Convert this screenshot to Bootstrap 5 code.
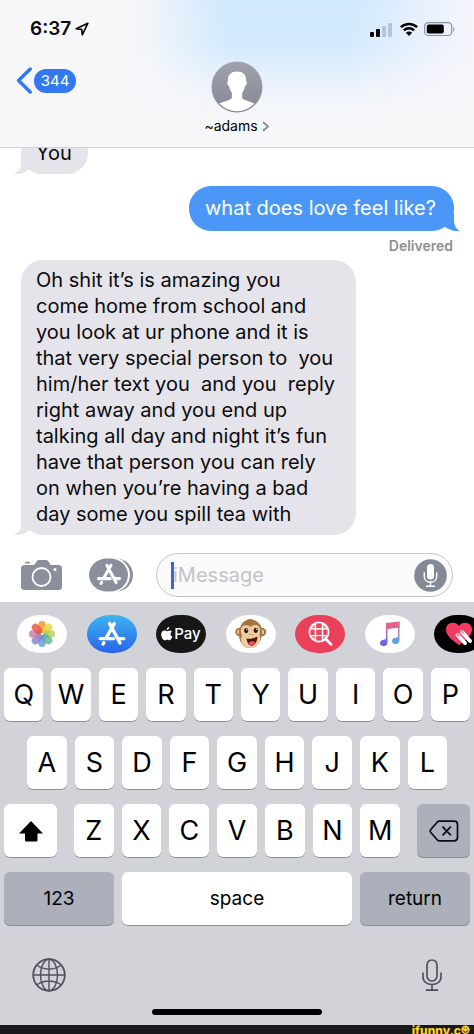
<!DOCTYPE html>
<html lang="en">
<head>
<meta charset="utf-8">
<meta name="viewport" content="width=device-width, initial-scale=1">
<title>Messages</title>
<link rel="stylesheet" href="https://cdn.jsdelivr.net/npm/bootstrap@5.3.0/dist/css/bootstrap.min.css">
<style>
  body { font-family: Inter, "Liberation Sans", sans-serif; color: #0b0b0d; background: #fff; overflow-x: hidden; }
  svg { display: block; flex: none; }
  button { color: inherit; }

  /* header */
  .chat-head {
    background:
      linear-gradient(to bottom, rgba(247,247,249,0) 0, rgba(247,247,249,.12) 45px, rgba(247,247,249,.7) 85px, #f7f7f9 118px),
      linear-gradient(to right, #f7f7f9 28%, #cfe9ff 48%, #cfe9ff 74%, #e6effd 88%, #f5f6fb 100%);
    border-bottom: 1px solid #d0d0d3;
  }
  .status-line { padding: 17px 18px 0 30px; height: 41px; }
  .clock { font-size: 19px; line-height: 24px; font-weight: 600; }
  .head-row { display: grid; grid-template-columns: 1fr auto 1fr; padding: 20px 16px 0; height: 106px; align-items: start; }
  .back-link { padding-top: 6px; }
  .unread { background: #3478f0; color: #fff; border-radius: 12px; font-size: 15px; line-height: 24px; width: 42px; }
  .who { font-size: 14px; line-height: 20px; margin-top: 3px; }

  /* messages */
  .bubble { position: relative; font-size: 20px; line-height: 26px; border-radius: 22px; white-space: pre-line; }
  .bubble-in { background: #e5e4ea; padding: 8px 16px 8px 15px; margin-left: 21px; }
  .bubble-long { width: 335px; padding-top: 7px; white-space: pre; }
  .bubble-cut { margin-top: -16px; }
  .bubble-out { background: #4b97f7; color: #fff; padding: 9px 0 10px 16px; width: 265px; margin-right: 20px; }
  .tail { position: absolute; bottom: 0; }
  .tail-in { left: -8px; }
  .tail-out { right: -6px; }
  .receipt { font-size: 14px; line-height: 15px; font-weight: 600; color: #8e8e92; padding: 7px 21px 7px; }

  /* composer */
  .composer { padding: 18px 21px 5px; }
  .apps-btn { margin: 0 23px 0 26px; }
  .entry { height: 44px; min-width: 0; border: 1px solid #c6c6ca; border-radius: 22px; background: #fafafa; padding: 0 5px 0 16px; position: relative; }
  .entry input { width: 0; border: 0; background: none; outline: 0; font-size: 20px; line-height: 26px; padding: 0; min-width: 0; }
  .entry input::placeholder { color: #c3c3c8; opacity: 1; }
  .text-caret { position: absolute; left: 14px; top: 8px; width: 3px; height: 27px; background: #3f62d8; }

  /* keyboard */
  .keyboard { background: #d1d3d9; padding-bottom: 10px; }
  .app-strip { padding: 13px 0 15px 17px; overflow: hidden; }
  .app-strip-row { margin-right: -10px; }
  .app-pill { width: 50px; height: 38px; border-radius: 23px / 19px; overflow: hidden; background: #fff; flex: none; }
  .app-store { background: linear-gradient(#3db4f2, #2a64e8); }
  .app-pay { background: #161617; color: #fff; font-size: 15px; line-height: 20px; font-weight: 500; gap: 1px; }
  .app-search { background: #ea4059; }
  .app-touch { background: #000; }
  .key-rows { display: flex; flex-direction: column; gap: 14px; padding: 0 4px; }
  .key-row { display: flex; gap: 8px; }
  .key-row-mid { padding: 0 23px; }
  .keycap { flex: 1 1 0; min-width: 0; height: 54px; padding: 0; border: 0; border-radius: 6px; background: #fff; box-shadow: inset 0 -1px 0 #8d9097; color: #000; font-size: 27px; line-height: 32px; display: flex; align-items: center; justify-content: center; }
  .keycap-side { flex: 0 0 53px; }
  .keycap-shift { margin-right: 9px; }
  .keycap-del { margin-left: 9px; }
  .keycap-wide { flex: 0 0 110px; }
  .keycap-word { font-size: 19px; line-height: 26px; }
  .keycap-gray { background: #abb0bb; box-shadow: inset 0 -1px 0 #888e9b; }
  .below-keys { padding: 32px 32px 0; height: 83px; color: #50535b; }
  .home-bar { width: 170px; height: 6px; border-radius: 3px; background: #000; }
  .site-bar { height: 9px; background: #19191b; overflow: hidden; padding-right: 4px; }
  .site-name { color: #ffd02a; font-size: 12px; line-height: 12px; font-weight: 800; }
</style>
<script src="https://cdn.jsdelivr.net/npm/bootstrap@5.3.0/dist/js/bootstrap.bundle.min.js"></script>
</head>
<body class="d-flex flex-column min-vh-100">

<svg width="0" height="0" class="position-absolute" aria-hidden="true">
  <symbol id="store-a" viewBox="0 0 28 26">
    <g fill="none" stroke="#fff" stroke-width="3.4" stroke-linecap="round">
      <path d="M11.6 2.6 22 22"/><path d="M16.2 2.6 8.2 16.8"/><path d="M2.2 17.6h13.2M20.6 17.6h5.2"/><path d="M5.8 21.8 5.1 23"/>
    </g>
  </symbol>
</svg>

<header class="chat-head">
  <div class="status-line d-flex justify-content-between align-items-start">
    <div class="d-flex align-items-center gap-1">
      <span class="clock">6:37</span>
      <svg width="14" height="14" viewBox="0 0 14 14"><path d="M12.8 1.3 1.2 6.8l5.5.6.6 5.4z" fill="none" stroke="#000" stroke-width="1.6" stroke-linejoin="round"/></svg>
    </div>
    <div class="d-flex align-items-center mt-1">
      <svg width="23" height="15" viewBox="0 0 23 15"><rect x="1" y="10" width="4" height="5" rx="1"/><rect x="7" y="7" width="4" height="8" rx="1"/><rect x="13" y="4" width="4" height="11" rx="1" fill="#b2c5d9"/><rect x="19" y="1" width="4" height="14" rx="1" fill="#b2c5d9"/></svg>
      <svg class="ms-2" width="18" height="14" viewBox="0 0 18 14"><g fill="none" stroke="#000" stroke-width="2.5"><path d="M.9 5.2a11.6 11.6 0 0 1 16.2 0"/><path d="M3.9 8.4a7.3 7.3 0 0 1 10.2 0"/></g><path d="M9 14 5.9 10.7a4.4 4.4 0 0 1 6.2 0z"/></svg>
      <svg class="ms-1" width="34" height="16" viewBox="0 0 34 16"><rect x="2.7" y="1.7" width="27" height="12.8" rx="3.6" fill="none" stroke="#87919c" stroke-width="1.2"/><rect x="4.8" y="3.6" width="17" height="9" rx="1.8"/><path d="M31.3 6v4.6c1.6-.7 1.6-3.9 0-4.6z" fill="#87919c"/></svg>
    </div>
  </div>
  <nav class="head-row" aria-label="Conversation">
    <a href="#" class="back-link d-flex align-items-center text-decoration-none" aria-label="Back, 344 unread">
      <svg width="18" height="27" viewBox="0 0 18 27"><path d="M14.2 2 2.6 13.5 14.2 25" fill="none" stroke="#3478f0" stroke-width="3.4" stroke-linecap="round" stroke-linejoin="round"/></svg>
      <span class="unread text-center">344</span>
    </a>
    <a href="#" class="d-flex flex-column align-items-center text-decoration-none text-black">
      <svg width="52" height="52" viewBox="0 0 52 52">
        <defs><linearGradient id="face" x2="0" y2="1"><stop stop-color="#a0a2ad"/><stop offset="1" stop-color="#858995"/></linearGradient><clipPath id="disc"><circle cx="26" cy="26" r="24.2"/></clipPath></defs>
        <circle cx="26" cy="26" r="25.5" fill="url(#face)"/>
        <path clip-path="url(#disc)" fill="#fff" d="M26 10.5c-6 0-9.4 3.700-9 9 0 1-.9 1.300-.6 2.800.3 1.500 1 2.800 1.700 3 .5 3 1.500 4.800 2.800 6.500v5c-1 3-9 3.200-15 7.200V52h40v-8c-6-4-13.700-4.200-14.700-7.200v-5c1.300-1.700 2.300-3.500 2.700-6.500.8-.2 1.500-1.500 1.800-3 .3-1.500-.6-1.800-.6-2.800.3-5.300-3-9-9.100-9z"/>
      </svg>
      <span class="who d-flex align-items-center gap-1">~adams <svg width="8" height="11" viewBox="0 0 8 11"><path d="M1.500 1.500l4.500 4-4.500 4" fill="none" stroke="#8b8b90" stroke-width="1.800" stroke-linecap="round"/></svg></span>
    </a>
  </nav>
</header>

<main class="d-flex flex-column flex-grow-1">
  <div class="overflow-hidden d-flex">
    <div class="bubble bubble-in bubble-cut">You<svg class="tail tail-in" width="24" height="18" viewBox="0 0 24 18"><path d="M8 0v8c0 5-3 8.500-8 10 7 .4 12-1 15-4l9-6z" fill="#e5e4ea"/></svg></div>
  </div>
  <div class="d-flex justify-content-end pt-1 mt-2">
    <div class="bubble bubble-out">what does love feel like?<svg class="tail tail-out" width="24" height="18" viewBox="0 0 24 18"><path d="M18 0v7c0 5 2 9 6 11-6 .3-11-1-15-4.300L0 6z" fill="#4b97f7"/><path d="M17 0H0v12l9 2z" fill="#4b97f7"/></svg></div>
  </div>
  <div class="receipt text-end">Delivered</div>
  <div class="bubble bubble-in bubble-long">Oh shit it’s is amazing you
come home from school and
you look at ur phone and it is
that very special person to  you
him/her text you  and you  reply
right away and you end up
talking all day and night it’s fun
have that person you can rely
on when you’re having a bad
day some you spill tea with<svg class="tail tail-in" width="24" height="18" viewBox="0 0 24 18"><path d="M8 0v8c0 5-3 8.500-8 10 7 .4 12-1 15-4l9-6z" fill="#e5e4ea"/></svg></div>

  <form class="composer d-flex align-items-center mt-auto" onsubmit="return false">
    <button type="button" class="border-0 bg-transparent p-0" aria-label="Camera">
      <svg width="42" height="32" viewBox="0 0 42 32"><path fill="#8a8f9b" d="M4 6h8c1 0 1.700-.5 2.300-1.500l1-1.600C16 1.500 17 1 18.500 1h6c1.500 0 2.500.5 3.200 1.900l1 1.600C29.300 5.500 30 6 31 6h6.500C40 6 41 7.200 41 9.500v18c0 2.300-1 3.500-3.500 3.500h-34C1 31 0 29.800 0 27.500v-18C0 7.200 1.200 6 4 6z"/><rect x="4" y="2.700" width="5" height="1.800" rx=".9" fill="#8a8f9b"/><circle cx="20.500" cy="18" r="9" fill="none" stroke="#fff" stroke-width="1.800"/><circle cx="34" cy="10.500" r="1.500" fill="#fff"/></svg>
    </button>
    <button type="button" class="apps-btn border-0 bg-transparent p-0" aria-label="Apps">
      <svg width="44" height="34" viewBox="0 0 44 34"><rect x="8" y=".5" width="36" height="33" rx="17" fill="#8a8f9b"/><rect x="3" y="-.5" width="38" height="35" rx="18" fill="#fff"/><rect x="0" y=".5" width="39" height="33" rx="18" ry="16.500" fill="#8a8f9b"/><use href="#store-a" x="7.500" y="4.500" width="25" height="24"/></svg>
    </button>
    <div class="entry d-flex align-items-center flex-grow-1">
      <input class="flex-grow-1" type="text" placeholder="iMessage" aria-label="iMessage">
      <span class="text-caret"></span>
      <button type="button" class="border-0 bg-transparent p-0" aria-label="Record audio">
        <svg width="33" height="33" viewBox="0 0 33 33"><circle cx="16.500" cy="16.500" r="16.300" fill="#838a96"/><rect x="13" y="5" width="7" height="15.500" rx="3.500" fill="#fff"/><path d="M10.300 14v3.400c0 7.600 12.400 7.600 12.400 0V14M16.500 23v4M12.500 27.300h8" fill="none" stroke="#fff" stroke-width="1.500" stroke-linecap="round"/></svg>
      </button>
    </div>
  </form>
</main>

<section class="keyboard" aria-label="Keyboard">
  <div class="app-strip">
    <div class="app-strip-row d-flex justify-content-between">
      <a href="#" class="app-pill d-flex align-items-center justify-content-center" aria-label="Photos">
        <svg width="28" height="28" viewBox="-14 -14 28 28"><g fill-opacity=".82">
          <rect x="-3.700" y="-13" width="7.400" height="12" rx="3.700" fill="#f2932c"/>
          <rect x="-3.700" y="-13" width="7.400" height="12" rx="3.700" fill="#ead437" transform="rotate(45)"/>
          <rect x="-3.700" y="-13" width="7.400" height="12" rx="3.700" fill="#b6d058" transform="rotate(90)"/>
          <rect x="-3.700" y="-13" width="7.400" height="12" rx="3.700" fill="#5fb889" transform="rotate(135)"/>
          <rect x="-3.700" y="-13" width="7.400" height="12" rx="3.700" fill="#5f9fd6" transform="rotate(180)"/>
          <rect x="-3.700" y="-13" width="7.400" height="12" rx="3.700" fill="#8583c4" transform="rotate(225)"/>
          <rect x="-3.700" y="-13" width="7.400" height="12" rx="3.700" fill="#c57ba8" transform="rotate(270)"/>
          <rect x="-3.700" y="-13" width="7.400" height="12" rx="3.700" fill="#e4573c" transform="rotate(315)"/></g></svg>
      </a>
      <a href="#" class="app-pill app-store d-flex align-items-center justify-content-center" aria-label="App Store"><svg width="28" height="26"><use href="#store-a"/></svg></a>
      <a href="#" class="app-pill app-pay d-flex align-items-center justify-content-center text-decoration-none"><svg width="12" height="14" viewBox="0 0 12 14"><path fill="#fff" d="M8.300 0c.1 1.600-1.100 3-2.600 3C5.500 1.600 6.900.1 8.300 0zM10.800 4.700c-2 1.300-1.600 4 .6 4.900-.5 1.500-1.700 3.700-2.900 3.700-.9 0-1.200-.5-2.300-.5s-1.500.5-2.300.5C2.100 13.300.2 10 .2 7.400c0-2.500 1.600-3.900 3.200-3.900 1.100 0 1.900.7 2.600.7.700 0 1.600-.8 2.900-.8.700 0 1.500.4 1.900 1.300z"/></svg>Pay</a>
      <a href="#" class="app-pill d-flex align-items-center justify-content-center" aria-label="Animoji">
        <svg width="32" height="32" viewBox="0 0 32 32"><circle cx="4.500" cy="14" r="4.200" fill="#a87741"/><circle cx="4.500" cy="14" r="2.400" fill="#edc99d"/><circle cx="27" cy="14" r="4.200" fill="#a87741"/><circle cx="27" cy="14" r="2.200" fill="#edc99d"/><path fill="#a67440" d="M15 1c1.500.7 3 .3 4 1.200C25 4 27.500 9 27 16c-.5 8-5 14-12 14S4 24 4 16C4 8 8 2 15 1z"/><path fill="#efcca0" d="M16 9c3-3.500 9-2 9 3 0 2-.5 3.500-.5 5 3 7-2.500 13-9 13C8 30 4 24 7 17.500 4.500 12 6 7.500 10 7.200c2.500 0 4.500.6 6 1.800z"/><ellipse cx="11.200" cy="12.600" rx="2.100" ry="2.600" fill="#24170f"/><ellipse cx="20.800" cy="12.300" rx="2.100" ry="2.600" fill="#24170f"/><circle cx="11.800" cy="11.700" r=".7" fill="#fff"/><circle cx="21.400" cy="11.400" r=".7" fill="#fff"/><path d="M14.500 16.500h.8M17.300 16.500h.8" stroke="#7c512d" stroke-width="1.200"/><path d="M11.500 20.500c4 .8 8-.3 11-2-.2 5-2.500 9-5.500 9.200-3 .1-5-3-5.500-7.200z" fill="#54120f"/><path d="M13.500 25c2-2 5-2.300 7-.7-1 2-2.200 3.200-3.600 3.200s-2.600-1-3.400-2.500z" fill="#e8545c"/></svg>
      </a>
      <a href="#" class="app-pill app-search d-flex align-items-center justify-content-center" aria-label="Images">
        <svg width="28" height="28" viewBox="0 0 28 28"><circle cx="13" cy="12" r="9.500" fill="#f58d9a" stroke="#fff" stroke-width="2"/><path d="M10.300 9.500h5.400V15h-5.400zM4.500 9.500h4V15h-4zM17.500 9.500h4V15h-4zM10.300 3.500h5.400V8h-5.400zM10.300 16.300h5.400v4.200h-5.400z" fill="#e84b60"/><path d="M4 8.800h18M4 15.500h18M9.500 3.500v17M16.500 3.500v17" stroke="#fff" stroke-width="1.200"/><path d="m19.800 19 5.200 5.400" stroke="#fff" stroke-width="2.800" stroke-linecap="round"/></svg>
      </a>
      <a href="#" class="app-pill d-flex align-items-center justify-content-center" aria-label="Music">
        <svg width="22" height="26" viewBox="0 0 22 26"><defs><linearGradient id="note" x2=".2" y2="1"><stop stop-color="#f0597a"/><stop offset=".3" stop-color="#e4648c"/><stop offset=".7" stop-color="#7577dc"/><stop offset="1" stop-color="#6d57dc"/></linearGradient><linearGradient id="note2" x2="0" y2="1"><stop stop-color="#ef5877"/><stop offset=".45" stop-color="#b983bb"/><stop offset="1" stop-color="#42a8ea"/></linearGradient></defs><path fill="url(#note)" d="M7 2 20.500.5v6L8.500 8v13c0 2.500-1.500 4-4 4S1 23.600 1 22c0-2 1.500-3 3.500-3.200 1.700-.2 2.500-.5 2.500-2z"/><path fill="url(#note2)" d="M19 .7h1.500V19c0 2.500-1.500 4-4 4S13 21.600 13 20s1.500-3 3.500-3.200c1.700-.2 2.500-.5 2.500-2z"/></svg>
      </a>
      <a href="#" class="app-pill app-touch d-flex align-items-center justify-content-center" aria-label="Digital Touch">
        <svg width="28" height="26" viewBox="0 0 28 26"><path fill="#f33b61" d="M14 24C6 18.500 1 14 1 8.500 1 1.500 10-.5 14 5c4-5.500 13-3.500 13 3.500C27 14 22 18.500 14 24z"/><path d="m12.500 14 7.500 8M17 11l8 9" stroke="#fff" stroke-width="4" stroke-linecap="round"/><path d="m12 13.300 1.500 1.500M16.500 10.300l1.500 1.500" stroke="#f58aa0" stroke-width="2" stroke-linecap="round"/></svg>
      </a>
    </div>
  </div>

  <div class="key-rows">
    <div class="key-row">
      <button type="button" class="keycap">Q</button><button type="button" class="keycap">W</button><button type="button" class="keycap">E</button><button type="button" class="keycap">R</button><button type="button" class="keycap">T</button><button type="button" class="keycap">Y</button><button type="button" class="keycap">U</button><button type="button" class="keycap">I</button><button type="button" class="keycap">O</button><button type="button" class="keycap">P</button>
    </div>
    <div class="key-row key-row-mid">
      <button type="button" class="keycap">A</button><button type="button" class="keycap">S</button><button type="button" class="keycap">D</button><button type="button" class="keycap">F</button><button type="button" class="keycap">G</button><button type="button" class="keycap">H</button><button type="button" class="keycap">J</button><button type="button" class="keycap">K</button><button type="button" class="keycap">L</button>
    </div>
    <div class="key-row">
      <button type="button" class="keycap keycap-side keycap-shift" aria-label="Shift"><svg width="26" height="22" viewBox="0 0 26 22"><path d="M13 1 25 13.500h-5.500V20c0 1-.6 1.500-1.500 1.500H8.500c-1 0-1.500-.5-1.500-1.500v-6.500H1z"/></svg></button>
      <button type="button" class="keycap">Z</button><button type="button" class="keycap">X</button><button type="button" class="keycap">C</button><button type="button" class="keycap">V</button><button type="button" class="keycap">B</button><button type="button" class="keycap">N</button><button type="button" class="keycap">M</button>
      <button type="button" class="keycap keycap-side keycap-gray keycap-del" aria-label="Delete"><svg width="30" height="22" viewBox="0 0 30 22"><path d="M10.500 1.200h14.700c2.200 0 3.300 1.100 3.300 3.300v13c0 2.200-1.100 3.300-3.300 3.300H10.500c-1 0-1.600-.3-2.300-1L1.800 12.500c-.8-1-.8-2 0-3l6.400-7.300c.7-.7 1.300-1 2.300-1zM13.500 6.600l8.400 8.800M21.900 6.600l-8.400 8.800" fill="none" stroke="#0b0d14" stroke-width="1.700" stroke-linejoin="round"/></svg></button>
    </div>
    <div class="key-row">
      <button type="button" class="keycap keycap-wide keycap-word keycap-gray">123</button>
      <button type="button" class="keycap keycap-word">space</button>
      <button type="button" class="keycap keycap-wide keycap-word keycap-gray">return</button>
    </div>
  </div>

  <div class="below-keys d-flex justify-content-between align-items-start">
    <button type="button" class="border-0 bg-transparent p-0" aria-label="Next keyboard"><svg width="34" height="34" viewBox="0 0 34 34"><g fill="none" stroke="currentColor" stroke-width="1.400"><circle cx="17" cy="17" r="15.800" stroke-width="1.800"/><ellipse cx="17" cy="17" rx="8.500" ry="15.800"/><path d="M17 1v32M1 17h32M5 7.200c7 5 17 5 24 0M5 26.800c7-5 17-5 24 0"/></g></svg></button>
    <button type="button" class="border-0 bg-transparent p-0" aria-label="Dictate"><svg width="20" height="34" viewBox="0 0 20 34"><g fill="none" stroke="currentColor" stroke-width="1.700" stroke-linecap="round"><rect x="5" y="2" width="10" height="21" rx="5"/><path d="M1 15v4c0 10 18 10 18 0v-4M10 26.500V32M4.500 32.200h11"/></g></svg></button>
  </div>
  <div class="home-bar mx-auto"></div>
</section>
<footer class="site-bar d-flex justify-content-end"><span class="site-name">ifunny.c</span><svg width="9" height="9" viewBox="0 0 9 9" aria-hidden="true"><circle cx="4.500" cy="4.700" r="4.200" fill="#ffd02a"/><path d="M2 5.200c.8 2.600 4.200 2.600 5 0M3.200 2.600v1M5.800 2.600v1" fill="none" stroke="#19191b"/></svg></footer>
</body>
</html>
